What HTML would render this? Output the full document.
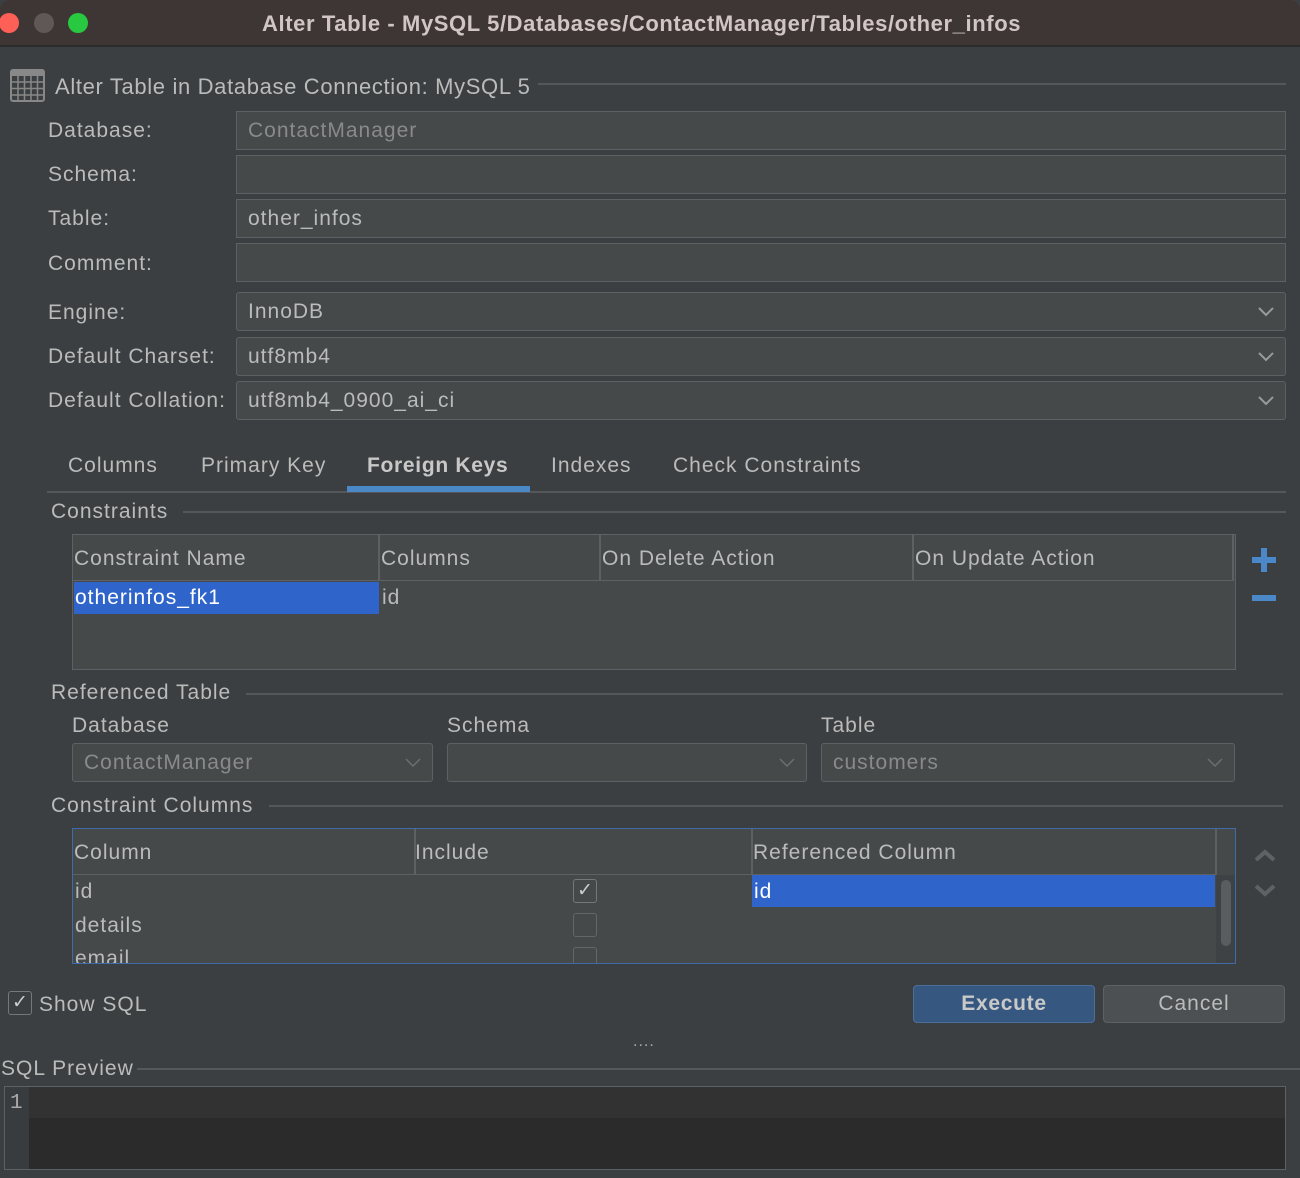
<!DOCTYPE html>
<html><head><meta charset="utf-8">
<style>
*{box-sizing:border-box;margin:0;padding:0}
body{width:1300px;height:1178px;background:#3c3f41;font-family:"Liberation Sans",sans-serif;color:#bbbbbb;font-size:21px;letter-spacing:1px;position:relative;overflow:hidden}
.a{position:absolute;white-space:nowrap}
.f{position:absolute;background:#45494a;border:1.5px solid #5e6163;border-radius:3px}
.ft{position:absolute;left:11px;top:6px}
.chev{position:absolute;right:10px;top:12px;width:18px;height:12px}
.line{position:absolute;height:1.5px;background:#555759}
</style></head><body>
<div class="a" style="left:0;top:0;width:1300px;height:47px;background:#3e3634;border-bottom:2px solid #2b2b2b;border-radius:10px 10px 0 0"></div>
<div class="a" style="left:-1px;top:13px;width:20px;height:20px;border-radius:50%;background:#fe5f57"></div>
<div class="a" style="left:34px;top:13px;width:20px;height:20px;border-radius:50%;background:#5f5856"></div>
<div class="a" style="left:68px;top:13px;width:20px;height:20px;border-radius:50%;background:#28c840"></div>
<div class="a" style="left:262px;top:11px;font-weight:bold;font-size:22px;letter-spacing:0.6px;color:#d2c6c4">Alter Table - MySQL 5/Databases/ContactManager/Tables/other_infos</div>

<svg class="a" style="left:10px;top:69px" width="35" height="33" viewBox="0 0 35 33"><rect x="1" y="1" width="33" height="31" rx="2" fill="none" stroke="#888" stroke-width="2"/><rect x="1" y="1" width="33" height="6" fill="#888"/><path d="M8 7V32M14.5 7V32M21 7V32M27.5 7V32M1 13H34M1 19.5H34M1 26H34" stroke="#888" stroke-width="1.5"/></svg>
<div class="a" style="left:55px;top:74px;font-size:22px;letter-spacing:0.65px">Alter Table in Database Connection: MySQL 5</div>
<div class="line" style="left:538px;top:83px;width:748px"></div>

<div class="a" style="left:48px;top:119px">Database:</div>
<div class="f" style="left:236px;top:111px;width:1050px;height:39px;border-radius:0"><span class="ft" style="color:#8a8a8a;top:7px">ContactManager</span></div>
<div class="a" style="left:48px;top:163px">Schema:</div>
<div class="f" style="left:236px;top:155px;width:1050px;height:39px;border-radius:0"></div>
<div class="a" style="left:48px;top:207px">Table:</div>
<div class="f" style="left:236px;top:199px;width:1050px;height:39px;border-radius:0"><span class="ft" style="top:7px">other_infos</span></div>
<div class="a" style="left:48px;top:252px">Comment:</div>
<div class="f" style="left:236px;top:243px;width:1050px;height:39px;border-radius:0"></div>

<div class="a" style="left:48px;top:301px">Engine:</div>
<div class="f" style="left:236px;top:292px;width:1050px;height:39px"><span class="ft" style="top:7px">InnoDB</span><svg class="chev" viewBox="0 0 18 12"><path d="M2 3l7 7 7-7" fill="none" stroke="#9a9a9a" stroke-width="2"/></svg></div>
<div class="a" style="left:48px;top:345px">Default Charset:</div>
<div class="f" style="left:236px;top:337px;width:1050px;height:39px"><span class="ft" style="top:7px">utf8mb4</span><svg class="chev" viewBox="0 0 18 12"><path d="M2 3l7 7 7-7" fill="none" stroke="#9a9a9a" stroke-width="2"/></svg></div>
<div class="a" style="left:48px;top:389px">Default Collation:</div>
<div class="f" style="left:236px;top:381px;width:1050px;height:39px"><span class="ft" style="top:7px">utf8mb4_0900_ai_ci</span><svg class="chev" viewBox="0 0 18 12"><path d="M2 3l7 7 7-7" fill="none" stroke="#9a9a9a" stroke-width="2"/></svg></div>

<div class="a" style="left:68px;top:454px">Columns</div>
<div class="a" style="left:201px;top:454px">Primary Key</div>
<div class="a" style="left:367px;top:454px;font-weight:bold;color:#c8c8c8;letter-spacing:0.7px">Foreign Keys</div>
<div class="a" style="left:551px;top:454px">Indexes</div>
<div class="a" style="left:673px;top:454px">Check Constraints</div>
<div class="line" style="left:47px;top:491px;width:1239px"></div>
<div class="a" style="left:347px;top:486px;width:183px;height:6px;background:#4a88c7"></div>

<div class="a" style="left:51px;top:500px">Constraints</div>
<div class="line" style="left:183px;top:511px;width:1103px"></div>
<div class="a" style="left:72px;top:534px;width:1164px;height:136px;background:#45494a;border:1.5px solid #5e6163"></div>
<div class="a" style="left:73px;top:535px;width:1160px;height:46px;border-bottom:1.5px solid #5e6163"></div>
<div class="a" style="left:378px;top:535px;width:1.5px;height:46px;background:#5e6163"></div>
<div class="a" style="left:599px;top:535px;width:1.5px;height:46px;background:#5e6163"></div>
<div class="a" style="left:912px;top:535px;width:1.5px;height:46px;background:#5e6163"></div>
<div class="a" style="left:1232px;top:535px;width:1.5px;height:46px;background:#5e6163"></div>
<div class="a" style="left:74px;top:547px">Constraint Name</div>
<div class="a" style="left:381px;top:547px">Columns</div>
<div class="a" style="left:602px;top:547px">On Delete Action</div>
<div class="a" style="left:915px;top:547px">On Update Action</div>
<div class="a" style="left:74px;top:582px;width:305px;height:32px;background:#2f65ca"></div>
<div class="a" style="left:75px;top:586px;color:#fff">otherinfos_fk1</div>
<div class="a" style="left:382px;top:586px">id</div>
<div class="a" style="left:1252px;top:557px;width:24px;height:6px;background:#4a88c7"></div>
<div class="a" style="left:1261px;top:548px;width:6px;height:24px;background:#4a88c7"></div>
<div class="a" style="left:1252px;top:595px;width:24px;height:6px;background:#4a88c7"></div>

<div class="a" style="left:51px;top:681px">Referenced Table</div>
<div class="line" style="left:246px;top:693px;width:1037px"></div>
<div class="a" style="left:72px;top:714px">Database</div>
<div class="a" style="left:447px;top:714px">Schema</div>
<div class="a" style="left:821px;top:714px">Table</div>
<div class="f" style="left:72px;top:743px;width:361px;height:39px"><span class="ft" style="color:#8a8a8a;top:7px">ContactManager</span><svg class="chev" viewBox="0 0 18 12"><path d="M2 3l7 7 7-7" fill="none" stroke="#6d6d6d" stroke-width="1.5"/></svg></div>
<div class="f" style="left:447px;top:743px;width:360px;height:39px"><svg class="chev" viewBox="0 0 18 12"><path d="M2 3l7 7 7-7" fill="none" stroke="#6d6d6d" stroke-width="1.5"/></svg></div>
<div class="f" style="left:821px;top:743px;width:414px;height:39px"><span class="ft" style="color:#8a8a8a;top:7px">customers</span><svg class="chev" viewBox="0 0 18 12"><path d="M2 3l7 7 7-7" fill="none" stroke="#6d6d6d" stroke-width="1.5"/></svg></div>

<div class="a" style="left:51px;top:794px">Constraint Columns</div>
<div class="line" style="left:269px;top:805px;width:1014px"></div>
<div class="a" style="left:72px;top:828px;width:1164px;height:136px;background:#45494a;border:1.5px solid #3d6ca8;overflow:hidden">
 <div class="a" style="left:0;top:0;width:1144px;height:46px;border-bottom:1.5px solid #5e6163"></div>
 <div class="a" style="left:341px;top:0;width:1.5px;height:46px;background:#5e6163"></div>
 <div class="a" style="left:678px;top:0;width:1.5px;height:46px;background:#5e6163"></div>
 <div class="a" style="left:1142px;top:0;width:1.5px;height:46px;background:#5e6163"></div>
 <div class="a" style="left:1px;top:12px">Column</div>
 <div class="a" style="left:342px;top:12px">Include</div>
 <div class="a" style="left:680px;top:12px">Referenced Column</div>
 <div class="a" style="left:679px;top:46px;width:463px;height:32px;background:#2f65ca"></div>
 <div class="a" style="left:681px;top:51px;color:#fff">id</div>
 <div class="a" style="left:2px;top:51px">id</div>
 <div class="a" style="left:2px;top:85px">details</div>
 <div class="a" style="left:2px;top:118px">email</div>
 <div class="a" style="left:500px;top:50px;width:24px;height:24px;border:1.5px solid #777;border-radius:3px;text-align:center;line-height:22px;font-size:19px;color:#ccc;letter-spacing:0">✓</div>
 <div class="a" style="left:500px;top:84px;width:24px;height:24px;border:1.5px solid #666;border-radius:3px"></div>
 <div class="a" style="left:500px;top:118px;width:24px;height:24px;border:1.5px solid #666;border-radius:3px"></div>
 <div class="a" style="left:1143px;top:46px;width:20px;height:90px;background:#3f4244"></div>
 <div class="a" style="left:1148px;top:51px;width:10px;height:66px;background:#5a5d5f;border-radius:5px"></div>
</div>
<svg class="a" style="left:1253px;top:846px" width="24" height="56" viewBox="0 0 24 56"><path d="M3 14l9-8 9 8M3 40l9 8 9-8" fill="none" stroke="#5f6264" stroke-width="4"/></svg>

<div class="a" style="left:8px;top:991px;width:24px;height:24px;border:1.5px solid #777;border-radius:3px;text-align:center;line-height:22px;font-size:19px;color:#ccc;letter-spacing:0">✓</div>
<div class="a" style="left:39px;top:993px">Show SQL</div>
<div class="a" style="left:913px;top:985px;width:182px;height:38px;background:#365880;border:1.5px solid #4c6f99;border-radius:4px;text-align:center;line-height:35px;font-weight:bold;color:#c9c9c9;letter-spacing:0.7px">Execute</div>
<div class="a" style="left:1103px;top:985px;width:182px;height:38px;background:#4c5052;border:1.5px solid #5e6163;border-radius:4px;text-align:center;line-height:35px;color:#bbb">Cancel</div>
<div class="a" style="left:633px;top:1033px;font-size:16px;color:#aaa">....</div>
<div class="a" style="left:1px;top:1057px">SQL Preview</div>
<div class="line" style="left:137px;top:1068px;width:1163px"></div>
<div class="a" style="left:4px;top:1086px;width:1282px;height:84px;background:#2b2b2b;border:1.5px solid #5e6163"></div>
<div class="a" style="left:5px;top:1087px;width:24px;height:82px;background:#393c3e"></div>
<div class="a" style="left:29px;top:1087px;width:1256px;height:31px;background:#323232"></div>
<div class="a" style="left:10px;top:1092px;font-family:'Liberation Mono',monospace;font-size:21px;color:#aaa;letter-spacing:0">1</div>
</body></html>
